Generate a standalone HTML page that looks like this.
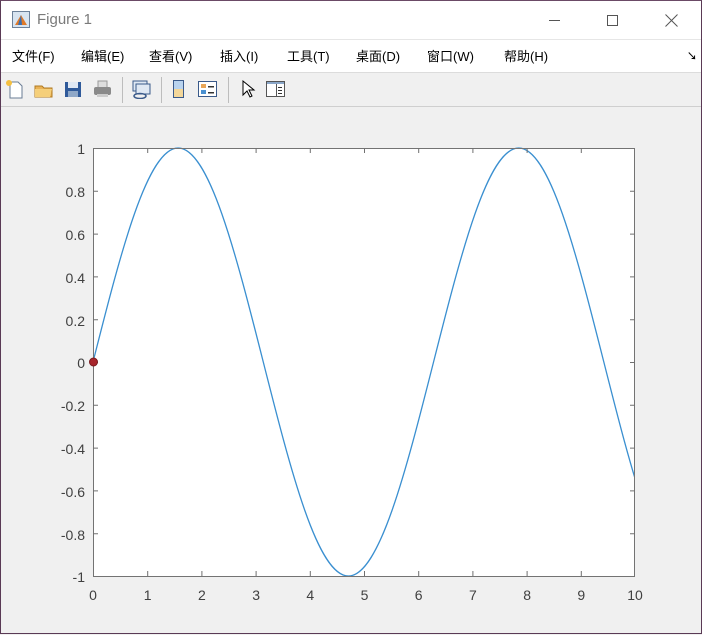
<!DOCTYPE html>
<html><head><meta charset="utf-8"><style>
*{margin:0;padding:0;box-sizing:border-box}
body{width:702px;height:634px;overflow:hidden;background:#f0f0f0;font-family:"Liberation Sans","Noto Sans CJK SC",sans-serif;position:relative}
.win{position:absolute;left:0;top:0;width:702px;height:634px;border:1px solid #5a3a55;border-top-color:#6b4a66}
.title{position:absolute;left:0;top:0;width:700px;height:38px;background:#fff}
.menu{position:absolute;left:0;top:38px;width:700px;height:34px;background:#fff;border-top:1px solid #e6e6e6;border-bottom:1px solid #dcdcdc;font-size:13px;color:#000}
.menu span{position:absolute;top:6px}
.tb{position:absolute;left:0;top:72px;width:700px;height:34px;background:#f0f0f0;border-bottom:1px solid #cfcfcf}
.sep{position:absolute;top:4px;width:1px;height:26px;background:#bdbdbd}
</style></head><body>
<div class="win">
<div class="title">
<svg style="position:absolute;left:11px;top:10px" width="18" height="17"><rect x="0.5" y="0.5" width="17" height="16" fill="#d8e4f0" stroke="#6d8199"/><path d="M3 14 L9 4 L12 9 L15 14Z" fill="#e07a2a"/><path d="M6 14 L9 4 L10 14Z" fill="#3a6fb0"/></svg>
<span style="position:absolute;left:36px;top:10px;font-size:15px;color:#7a7a7a">Figure 1</span>
<div style="position:absolute;left:548px;top:19px;width:11px;height:1px;background:#555"></div>
<div style="position:absolute;left:606px;top:14px;width:11px;height:11px;border:1px solid #555"></div>
<svg style="position:absolute;left:664px;top:13px" width="13" height="13"><path d="M0.5 0.5L12.5 12.5M12.5 0.5L0.5 12.5" stroke="#555" stroke-width="1"/></svg>
</div>
<div class="menu">
<span style="left:11px">文件(F)</span><span style="left:80px">编辑(E)</span><span style="left:148px">查看(V)</span><span style="left:219px">插入(I)</span><span style="left:286px">工具(T)</span><span style="left:355px">桌面(D)</span><span style="left:426px">窗口(W)</span><span style="left:503px">帮助(H)</span>
<span style="left:686px;top:8px;font-size:10px;font-weight:bold">↘</span>
</div>
<div class="tb">
<svg style="position:absolute;left:4px;top:6px" width="20" height="20"><path d="M5 3h8l4 4v12H5z" fill="#fff" stroke="#6a7d95"/><circle cx="4" cy="4" r="3" fill="#f5c040"/></svg>
<svg style="position:absolute;left:33px;top:6px" width="20" height="20"><path d="M1 7h7l2 2h8v9H1z" fill="#e9b257" stroke="#b07a20"/><path d="M1 10h17l-2 8H1z" fill="#f5cf7a"/></svg>
<svg style="position:absolute;left:62px;top:6px" width="20" height="20"><rect x="2" y="3" width="16" height="15" fill="#2f5a9a"/><rect x="5" y="3" width="10" height="6" fill="#dfe8f3"/><rect x="5" y="12" width="10" height="6" fill="#8fa8c8"/></svg>
<svg style="position:absolute;left:91px;top:6px" width="20" height="20"><rect x="6" y="2" width="9" height="7" fill="#ddd" stroke="#999"/><rect x="2" y="8" width="17" height="8" rx="2" fill="#8a8a8a"/><rect x="5" y="15" width="11" height="3" fill="#ccc"/></svg>
<div class="sep" style="left:121px"></div>
<svg style="position:absolute;left:129px;top:6px" width="22" height="20"><rect x="3" y="2" width="14" height="10" fill="#dfe8f3" stroke="#3a5a8a"/><rect x="6" y="5" width="14" height="10" fill="#dfe8f3" stroke="#3a5a8a"/><ellipse cx="10" cy="17" rx="6" ry="2.5" fill="none" stroke="#3a5a8a" stroke-width="1.5"/></svg>
<div class="sep" style="left:160px"></div>
<svg style="position:absolute;left:170px;top:6px" width="16" height="20"><rect x="2.5" y="1.5" width="10" height="17" fill="#f3d79a" stroke="#3a5a8a"/><rect x="3" y="2" width="9" height="8" fill="#b9d3ee"/></svg>
<svg style="position:absolute;left:196px;top:6px" width="22" height="20"><rect x="1.5" y="2.5" width="18" height="15" fill="#fff" stroke="#3a5a8a"/><rect x="4" y="5" width="5" height="4" fill="#e9a657"/><rect x="4" y="11" width="5" height="4" fill="#4a90d0"/><rect x="11" y="7" width="6" height="1.5" fill="#333"/><rect x="11" y="13" width="6" height="1.5" fill="#333"/></svg>
<div class="sep" style="left:227px"></div>
<svg style="position:absolute;left:240px;top:6px" width="16" height="20"><path d="M2 2L2 16L6 12L9 18L11 17L8 11L13 11Z" fill="#fff" stroke="#000"/></svg>
<svg style="position:absolute;left:264px;top:6px" width="22" height="20"><rect x="1.5" y="2.5" width="18" height="15" fill="#fff" stroke="#555"/><rect x="2" y="3" width="17" height="2" fill="#8aa6c8"/><rect x="11" y="5" width="1" height="12" fill="#555"/><rect x="13" y="8" width="4" height="1" fill="#333"/><rect x="13" y="11" width="4" height="1" fill="#333"/><rect x="13" y="14" width="4" height="1" fill="#333"/></svg>
</div>
<svg style="position:absolute;left:0;top:0" width="702" height="634" font-family="Liberation Sans, sans-serif" font-size="14" fill="#404040">
<defs><clipPath id="c"><rect x="92" y="100" width="542" height="500"/></clipPath></defs>
<rect x="92" y="147" width="542" height="428" fill="#fff"/>
<g clip-path="url(#c)"><path transform="translate(92,361) scale(54.2,-214)" vector-effect="non-scaling-stroke" fill="none" stroke="#3a8fd0" stroke-width="1.3" d="M0 0 C0.5123 0.5123 1.0023 1 1.5708 1 S2.6293 0.5123 3.1416 0 S4.1439 -1 4.7124 -1 S5.7709 -0.5123 6.2832 0 S7.2855 1 7.854 1 S8.9125 0.5123 9.4248 0 S10.4271 -1 10.9956 -1"/></g>
<g stroke="#707070" stroke-width="1" fill="none">
<path d="M92.5 147.5V575.5H633.5V147.5Z" stroke="#737373"/>
<path d="M146.7 575v-5M200.9 575v-5M255.1 575v-5M309.3 575v-5M363.5 575v-5M417.7 575v-5M471.9 575v-5M526.1 575v-5M580.3 575v-5M146.7 147v5M200.9 147v5M255.1 147v5M309.3 147v5M363.5 147v5M417.7 147v5M471.9 147v5M526.1 147v5M580.3 147v5"/>
<path d="M92 190.3h5M92 233.1h5M92 275.9h5M92 318.7h5M92 361.5h5M92 404.3h5M92 447.1h5M92 489.9h5M92 532.7h5M634 190.3h-5M634 233.1h-5M634 275.9h-5M634 318.7h-5M634 361.5h-5M634 404.3h-5M634 447.1h-5M634 489.9h-5M634 532.7h-5"/>
</g>
<circle cx="92.5" cy="361" r="4" fill="#a8252c" stroke="#7a1a1f"/>
<g text-anchor="end">
<text x="84" y="153">1</text><text x="84" y="196">0.8</text><text x="84" y="239">0.6</text><text x="84" y="282">0.4</text><text x="84" y="325">0.2</text><text x="84" y="367">0</text><text x="84" y="410">-0.2</text><text x="84" y="453">-0.4</text><text x="84" y="496">-0.6</text><text x="84" y="539">-0.8</text><text x="84" y="581">-1</text>
</g>
<g text-anchor="middle">
<text x="92" y="599">0</text><text x="146.7" y="599">1</text><text x="200.9" y="599">2</text><text x="255.1" y="599">3</text><text x="309.3" y="599">4</text><text x="363.5" y="599">5</text><text x="417.7" y="599">6</text><text x="471.9" y="599">7</text><text x="526.1" y="599">8</text><text x="580.3" y="599">9</text><text x="634" y="599">10</text>
</g>
</svg>
</div>
</body></html>
